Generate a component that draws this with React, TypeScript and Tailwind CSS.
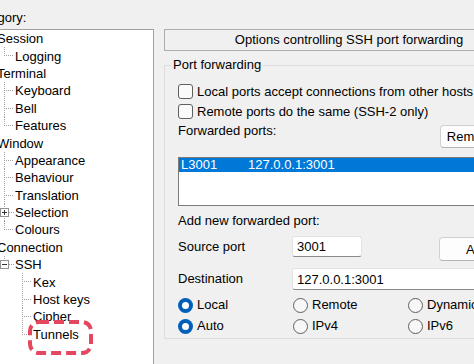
import React from "react";

type TreeItem = {
  label: string;
  level: number;
  box?: "plus" | "minus";
};

const ROW = 17.4;

const tree: TreeItem[] = [
  { label: "Session", level: 0 },
  { label: "Logging", level: 1 },
  { label: "Terminal", level: 0 },
  { label: "Keyboard", level: 1 },
  { label: "Bell", level: 1 },
  { label: "Features", level: 1 },
  { label: "Window", level: 0 },
  { label: "Appearance", level: 1 },
  { label: "Behaviour", level: 1 },
  { label: "Translation", level: 1 },
  { label: "Selection", level: 1, box: "plus" },
  { label: "Colours", level: 1 },
  { label: "Connection", level: 0 },
  { label: "SSH", level: 1, box: "minus" },
  { label: "Kex", level: 2 },
  { label: "Host keys", level: 2 },
  { label: "Cipher", level: 2 },
  { label: "Tunnels", level: 2 },
];

// is there a later row at `level` before the tree climbs above it
const hasLaterAt = (index: number, level: number) => {
  for (let i = index + 1; i < tree.length; i++) {
    if (tree[i].level < level) return false;
    if (tree[i].level === level) return true;
  }
  return false;
};

const dots = { stroke: "#a0a0a0", strokeDasharray: "1 1", shapeRendering: "crispEdges" as const };

const Guide = ({ through }: { through: boolean }) => (
  <svg width="18" height={ROW} className="block shrink-0">
    {through && <line x1="7.5" y1="0" x2="7.5" y2={ROW} {...dots} />}
  </svg>
);

const Connector = ({ down, box }: { down: boolean; box?: "plus" | "minus" }) => (
  <svg width="18" height={ROW} className="block shrink-0">
    <line x1="7.5" y1="0" x2="7.5" y2={down ? ROW : 8.5} {...dots} />
    <line x1={box ? 12 : 9} y1="8.5" x2="17" y2="8.5" {...dots} />
    {box && (
      <g shapeRendering="crispEdges">
        <rect x="3.5" y="4.5" width="8" height="8" fill="#fff" stroke="#919191" />
        <line x1="5" y1="8.5" x2="10" y2="8.5" stroke="#333" />
        {box === "plus" && <line x1="7.5" y1="6" x2="7.5" y2="11" stroke="#333" />}
      </g>
    )}
  </svg>
);

const Checkbox = ({ label }: { label: string }) => (
  <div className="flex items-center h-[19px]">
    <span className="w-[15px] h-[15px] rounded-[3px] border border-[#5f5f5f] bg-[#fafafa] shrink-0" />
    <span className="ml-[4px] whitespace-nowrap">{label}</span>
  </div>
);

const Radio = ({ label, checked }: { label: string; checked?: boolean }) => (
  <div className="flex items-center w-[115px] shrink-0">
    {checked ? (
      <span className="w-[15px] h-[15px] rounded-full bg-[#005fb8] flex items-center justify-center shrink-0">
        <span className="w-[7px] h-[7px] rounded-full bg-white" />
      </span>
    ) : (
      <span className="w-[15px] h-[15px] rounded-full border border-[#5f5f5f] bg-[#f7f7f7] shrink-0" />
    )}
    <span className="ml-[4px] whitespace-nowrap">{label}</span>
  </div>
);

const WinButton = ({ label, width, className = "" }: { label: string; width: string; className?: string }) => (
  <button
    className={`${width} ${className} shrink-0 rounded-[4px] border border-[#d0d0d0] border-b-[#b5b5b5] bg-[#fdfdfd] text-[13px] leading-none whitespace-nowrap`}
  >
    {label}
  </button>
);

export default function App() {
  return (
    <div className="relative w-[474px] h-[364px] overflow-hidden bg-[#f0f0f0] text-[13px] text-black flex font-['Liberation_Sans',Arial,sans-serif]">
      {/* category tree */}
      <div className="ml-[-40px] w-[194px] shrink-0 flex flex-col">
        <div className="h-[29px] pl-[10px] pt-[10px] leading-[16px]">Category:</div>
        <div className="ml-[4px] flex-1 bg-white border border-[#a0a0a0] border-b-0 pl-[32px]">
          {tree.map((item, i) => (
            <div key={item.label} className="flex items-center" style={{ height: ROW }}>
              {Array.from({ length: item.level }).map((_, col) =>
                col === item.level - 1 ? (
                  <Connector key={col} down={hasLaterAt(i, item.level)} box={item.box} />
                ) : (
                  <Guide key={col} through={hasLaterAt(i, col + 1)} />
                )
              )}
              <span className="whitespace-nowrap leading-[17px]">{item.label}</span>
            </div>
          ))}
        </div>
      </div>

      {/* options panel */}
      <div className="ml-[10px] w-[370px] shrink-0 pt-[29px] flex flex-col">
        <div className="h-[22px] border border-[#adadad] flex items-center justify-center whitespace-nowrap">
          Options controlling SSH port forwarding
        </div>

        <fieldset className="mt-[6px] border border-[#dcdcdc] pb-[2px]">
          <legend className="ml-[6px] px-[2px] leading-[16px]">Port forwarding</legend>
          <div className="pl-[13px] flex flex-col">
            <div className="mt-[9px]">
              <Checkbox label="Local ports accept connections from other hosts" />
            </div>
            <div className="mt-[1px]">
              <Checkbox label="Remote ports do the same (SSH-2 only)" />
            </div>

            <div className="mt-[4px] flex items-start">
              <span className="w-[262px] leading-[12px] whitespace-nowrap">Forwarded ports:</span>
              <WinButton label="Remove" width="w-[62px]" className="h-[23px]" />
            </div>

            <div className="mt-[9px] w-[340px] h-[49px] border border-[#7a7a7a] bg-white">
              <div className="h-[14px] bg-[#0078d7] text-white flex items-center leading-[14px] pl-[2px]">
                <span className="w-[67px]">L3001</span>
                <span>127.0.0.1:3001</span>
              </div>
            </div>

            <div className="mt-[7px] leading-[16px]">Add new forwarded port:</div>

            <div className="mt-[7px] flex items-start">
              <span className="w-[114px] leading-[21px]">Source port</span>
              <input
                readOnly
                value="3001"
                className="w-[70px] h-[21px] bg-white border border-[#e2e2e2] border-b-[#8a8a8a] rounded-[3px] pl-[4px] outline-none text-[13px]"
              />
              <WinButton label="Add" width="w-[77px]" className="ml-[77px] mt-[1px] h-[24px]" />
            </div>

            <div className="mt-[7px] flex items-start">
              <span className="w-[114px] leading-[22px]">Destination</span>
              <input
                readOnly
                value="127.0.0.1:3001"
                className="w-[250px] h-[22px] bg-white border border-[#e2e2e2] border-b-[#8a8a8a] rounded-[3px] pl-[4px] outline-none text-[13px]"
              />
            </div>

            <div className="mt-[5px] h-[20px] flex items-center">
              <Radio label="Local" checked />
              <Radio label="Remote" />
              <Radio label="Dynamic" />
            </div>
            <div className="mt-[1px] h-[20px] flex items-center">
              <Radio label="Auto" checked />
              <Radio label="IPv4" />
              <Radio label="IPv6" />
            </div>
          </div>
        </fieldset>
      </div>

      {/* red dashed annotation around Tunnels */}
      <svg className="absolute left-[27px] top-[319px]" width="67" height="37">
        <rect
          x="3"
          y="3"
          width="61"
          height="31"
          rx="9"
          fill="none"
          stroke="#e5475f"
          strokeWidth="4"
          strokeDasharray="10 5"
        />
      </svg>
    </div>
  );
}
